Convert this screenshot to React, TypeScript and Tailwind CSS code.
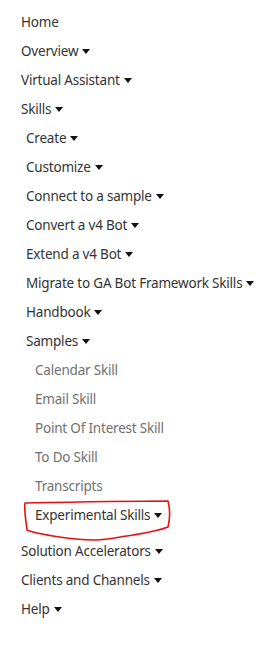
const Caret = () => (
  <span className="ml-[4px] inline-block align-[2px] border-x-[4px] border-t-[5px] border-x-transparent border-t-[#111]" />
);

type Item = { label: string; indent: number; caret?: boolean; muted?: boolean };

const items: Item[] = [
  { label: "Home", indent: 0 },
  { label: "Overview", indent: 0, caret: true },
  { label: "Virtual Assistant", indent: 0, caret: true },
  { label: "Skills", indent: 0, caret: true },
  { label: "Create", indent: 1, caret: true },
  { label: "Customize", indent: 1, caret: true },
  { label: "Connect to a sample", indent: 1, caret: true },
  { label: "Convert a v4 Bot", indent: 1, caret: true },
  { label: "Extend a v4 Bot", indent: 1, caret: true },
  { label: "Migrate to GA Bot Framework Skills", indent: 1, caret: true },
  { label: "Handbook", indent: 1, caret: true },
  { label: "Samples", indent: 1, caret: true },
  { label: "Calendar Skill", indent: 2, muted: true },
  { label: "Email Skill", indent: 2, muted: true },
  { label: "Point Of Interest Skill", indent: 2, muted: true },
  { label: "To Do Skill", indent: 2, muted: true },
  { label: "Transcripts", indent: 2, muted: true },
];

const bottom: Item[] = [
  { label: "Solution Accelerators", indent: 0, caret: true },
  { label: "Clients and Channels", indent: 0, caret: true },
  { label: "Help", indent: 0, caret: true },
];

const indentCls = ["pl-[21px]", "pl-[26px]", "pl-[35px]"];

function Row({ item }: { item: Item }) {
  return (
    <li
      className={`${indentCls[item.indent]} h-[29px] leading-[29px] whitespace-nowrap ${
        item.muted ? "text-[#707070]" : "text-[#333]"
      }`}
    >
      {item.label}
      {item.caret && <Caret />}
    </li>
  );
}

export default function App() {
  return (
    <div
      className="w-[268px] h-[665px] bg-white text-[13.5px] tracking-[-0.2px] pt-[8px]"
      style={{ fontFamily: '"Segoe UI", "Noto Sans", sans-serif' }}
    >
      <ul>
        {items.map((it) => (
          <Row key={it.label} item={it} />
        ))}
        <li className="relative pl-[35px] h-[36px] leading-[29px] whitespace-nowrap text-[#333]">
          Experimental Skills
          <Caret />
          {/* hand-drawn highlight */}
          <svg
            className="absolute left-[23px] top-[-2px] pointer-events-none"
            width="150"
            height="44"
            viewBox="0 0 150 44"
            fill="none"
          >
            <path
              d="M2 4 C 50 3, 100 2, 145 2 C 147 10, 147 20, 145 28 C 135 32, 122 34, 110 36 C 95 38, 85 41, 72 41 C 55 41, 42 39, 30 37 C 18 35, 8 33, 4 31 C 3 22, 1 12, 2 4 Z"
              stroke="#e81010"
              strokeWidth="1.6"
              strokeLinejoin="round"
            />
          </svg>
        </li>
        {bottom.map((it) => (
          <Row key={it.label} item={it} />
        ))}
      </ul>
    </div>
  );
}
